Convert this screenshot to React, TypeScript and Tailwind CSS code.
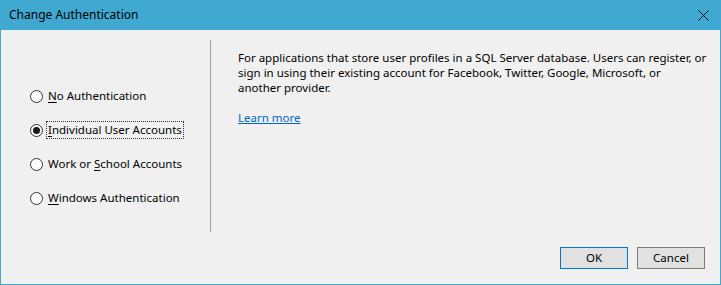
import { useState } from "react";

const options = [
  { id: "none", pre: "", key: "N", post: "o Authentication" },
  { id: "individual", pre: "", key: "I", post: "ndividual User Accounts" },
  { id: "work", pre: "Work or ", key: "S", post: "chool Accounts" },
  { id: "windows", pre: "", key: "W", post: "indows Authentication" },
];

const Radio = ({ checked }: { checked: boolean }) => (
  <span className="flex h-[13px] w-[13px] shrink-0 items-center justify-center rounded-full border border-[#333333] bg-white">
    {checked && <span className="h-[7px] w-[7px] rounded-full bg-[#1a1a1a]" />}
  </span>
);

export default function App() {
  const [selected, setSelected] = useState("individual");

  return (
    <div
      className="flex h-[285px] w-[721px] flex-col border-x border-b border-[#3fa9d1] bg-[#f0f0f0] text-[11.5px] text-black"
      style={{ fontFamily: '"Noto Sans", "Liberation Sans", sans-serif' }}
    >
      <div className="flex h-[30px] shrink-0 items-center justify-between bg-[#3fa9d1] pl-[8px] pr-[10px]">
        <span className="text-[12px]">Change Authentication</span>
        <svg width="11" height="11" viewBox="0 0 11 11" className="mr-[1px]">
          <path d="M0.5 0.5 L10.5 10.5 M10.5 0.5 L0.5 10.5" stroke="#000" strokeWidth="1" />
        </svg>
      </div>

      <div className="flex flex-1 flex-col pt-[10px]">
        <div className="flex">
          <div className="flex w-[209px] shrink-0 flex-col gap-[16px] pl-[29px] pt-[47px]">
            {options.map((o) => (
              <label
                key={o.id}
                className="flex h-[18px] cursor-default items-center gap-[3px]"
                onClick={() => setSelected(o.id)}
              >
                <Radio checked={selected === o.id} />
                <span
                  className={`border px-[1px] leading-[16px] ${
                    selected === o.id ? "border-dotted border-[#333333]" : "border-transparent"
                  }`}
                >
                  {o.pre}
                  <span className="underline underline-offset-2">{o.key}</span>
                  {o.post}
                </span>
              </label>
            ))}
          </div>
          <div className="h-[192px] w-px shrink-0 bg-[#a0a0a0]" />
          <div className="min-w-0 flex-1 pl-[27px] pr-[16px] pt-[10px]">
            <p className="whitespace-nowrap leading-[15px]">
              For applications that store user profiles in a SQL Server database. Users can register, or
              <br />
              sign in using their existing account for Facebook, Twitter, Google, Microsoft, or
              <br />
              another provider.
            </p>
            <a className="mt-[15px] inline-block leading-[15px] text-[#0066cc] underline" href="#">
              Learn more
            </a>
          </div>
        </div>

        <div className="mt-[15px] flex justify-end gap-[9px] pr-[15px]">
          <button className="h-[22px] w-[68px] border border-[#0078d7] bg-[#e1e1e1] leading-[20px]">
            OK
          </button>
          <button className="h-[22px] w-[68px] border border-[#7a7a7a] bg-[#e1e1e1] leading-[20px]">
            Cancel
          </button>
        </div>
      </div>
    </div>
  );
}
